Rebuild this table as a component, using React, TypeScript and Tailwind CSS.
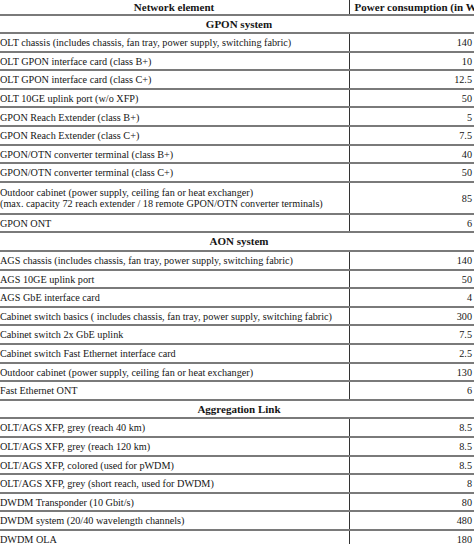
import React from 'react';

type Row = { name: string | string[]; value: string } | { section: string };

const rows: Row[] = [
  { section: 'GPON system' },
  { name: 'OLT chassis (includes chassis, fan tray, power supply, switching fabric)', value: '140' },
  { name: 'OLT GPON interface card (class B+)', value: '10' },
  { name: 'OLT GPON interface card (class C+)', value: '12.5' },
  { name: 'OLT 10GE uplink port (w/o XFP)', value: '50' },
  { name: 'GPON Reach Extender (class B+)', value: '5' },
  { name: 'GPON Reach Extender (class C+)', value: '7.5' },
  { name: 'GPON/OTN converter terminal (class B+)', value: '40' },
  { name: 'GPON/OTN converter terminal (class C+)', value: '50' },
  {
    name: [
      'Outdoor cabinet (power supply, ceiling fan or heat exchanger)',
      '(max. capacity 72 reach extender / 18 remote GPON/OTN converter terminals)',
    ],
    value: '85',
  },
  { name: 'GPON ONT', value: '6' },
  { section: 'AON system' },
  { name: 'AGS chassis (includes chassis, fan tray, power supply, switching fabric)', value: '140' },
  { name: 'AGS 10GE uplink port', value: '50' },
  { name: 'AGS GbE interface card', value: '4' },
  { name: 'Cabinet switch basics ( includes chassis, fan tray, power supply, switching fabric)', value: '300' },
  { name: 'Cabinet switch 2x GbE uplink', value: '7.5' },
  { name: 'Cabinet switch Fast Ethernet interface card', value: '2.5' },
  { name: 'Outdoor cabinet (power supply, ceiling fan or heat exchanger)', value: '130' },
  { name: 'Fast Ethernet ONT', value: '6' },
  { section: 'Aggregation Link' },
  { name: 'OLT/AGS XFP, grey (reach 40 km)', value: '8.5' },
  { name: 'OLT/AGS XFP, grey (reach 120 km)', value: '8.5' },
  { name: 'OLT/AGS XFP, colored (used for pWDM)', value: '8.5' },
  { name: 'OLT/AGS XFP, grey (short reach, used for DWDM)', value: '8' },
  { name: 'DWDM Transponder (10 Gbit/s)', value: '80' },
  { name: 'DWDM system (20/40 wavelength channels)', value: '480' },
  { name: 'DWDM OLA', value: '180' },
];

const App: React.FC = () => {
  return (
    <div className="w-[474px] h-[544px] overflow-hidden bg-white text-[#151515] text-[10.2px] leading-[11.5px] font-['Liberation_Serif',serif]">
      <div className="w-[486px] -ml-[1px]">
        {/* Header */}
        <div className="flex h-[15.5px] border-b-2 border-[#7a7a7a] font-bold text-[11px] leading-[12px]">
          <div className="w-[351px] border-r border-[#333] flex items-end justify-center pb-[1px]">Network element</div>
          <div className="flex-1 flex items-end justify-center pb-[1px] whitespace-nowrap">Power consumption (in W)</div>
        </div>

        {rows.map((row, i) =>
          'section' in row ? (
            <div
              key={i}
              className="h-[18.6px] border-b-2 border-[#7a7a7a] flex items-center justify-center font-bold text-[11px] pt-[1px] pr-[6px]"
            >
              {row.section}
            </div>
          ) : (
            <div
              key={i}
              className={`flex border-b-2 border-[#7a7a7a] ${Array.isArray(row.name) ? 'h-[32px]' : 'h-[18.6px]'}`}
            >
              <div className="w-[351px] border-r border-[#333] flex flex-col justify-center pl-[1px] pt-[1px] whitespace-nowrap">
                {Array.isArray(row.name) ? row.name.map((l, j) => <div key={j}>{l}</div>) : row.name}
              </div>
              <div className="flex-1 flex items-center justify-end pr-[13px] pt-[1px]">{row.value}</div>
            </div>
          )
        )}
      </div>
    </div>
  );
};

export default App;
